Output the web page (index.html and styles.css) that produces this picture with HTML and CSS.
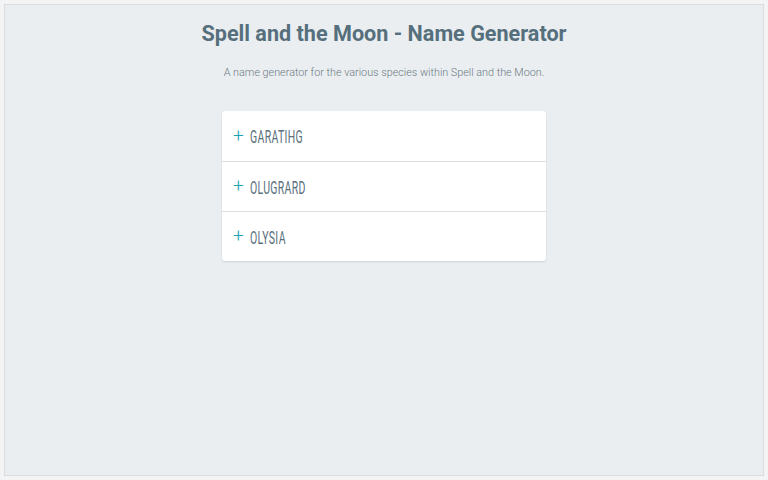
FILE: index.html
```html
<!DOCTYPE html>
<html lang="en">
<head>
  <meta charset="UTF-8" />
  <title>Spell and the Moon - Name Generator</title>
  <link rel="stylesheet" href="styles.css">
</head>
<body>
  <main class="page">
    <header class="intro">
      <h1>Spell and the Moon - Name Generator</h1>
      <p>A name generator for the various species within Spell and the Moon.</p>
    </header>

    <section class="species" aria-label="Species">
      <button class="species-row" type="button"><span class="plus">+</span><span class="name">GARATIHG</span></button>
      <button class="species-row" type="button"><span class="plus">+</span><span class="name">OLUGRARD</span></button>
      <button class="species-row" type="button"><span class="plus">+</span><span class="name">OLYSIA</span></button>
    </section>
  </main>
</body>
</html>
```

FILE: styles.css
```css
/* Base */
html, body {
  height: 100%;
}

body {
  margin: 0;
  padding: 4px;
  box-sizing: border-box;
  background: #f4f4f4;
  font-family: Roboto, "Liberation Sans", Arial, sans-serif;
  color: #546e7a;
}

.page {
  height: 472px;
  box-sizing: border-box;
  background: #eaeef1;
  border: 1px solid #dadddf;
  display: flex;
  flex-direction: column;
  align-items: center;
}

/* Heading */
.intro {
  text-align: center;
  padding-top: 16px;
}

.intro h1 {
  margin: 0;
  font-size: 21.6px;
  font-weight: 700;
  color: #566f7c;
}

.intro p {
  margin: 20px 0 0;
  font-size: 10.8px;
  font-weight: 300;
  color: #6c7a83;
}

/* Species list */
.species {
  width: 324px;
  margin-top: 32px;
  background: #fff;
  border-radius: 3px;
  box-shadow: 0 1px 2px rgba(0, 0, 0, 0.12);
  display: flex;
  flex-direction: column;
}

.species-row {
  height: 50px;
  display: flex;
  align-items: center;
  padding: 0 0 0 11px;
  border: none;
  border-top: 1px solid #dcdfe1;
  background: transparent;
  font-family: Roboto, sans-serif;
  color: #5a6f7b;
  text-align: left;
  cursor: pointer;
}

.species-row:first-child {
  border-top: none;
}

.plus {
  width: 17px;
  font-size: 19px;
  font-weight: 300;
  color: #1ba2b6;
  line-height: 1;
  position: relative;
  top: -1px;
}

/* narrow, tall caps for the species names */
.name {
  display: inline-block;
  font-size: 17.5px;
  font-weight: 400;
  transform: scaleX(0.6);
  transform-origin: left center;
  letter-spacing: 0.03em;
  position: relative;
  top: 1px;
}
```
